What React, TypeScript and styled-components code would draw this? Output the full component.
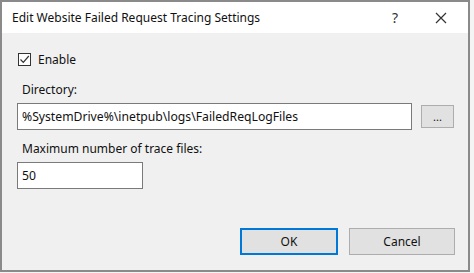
import styled, { createGlobalStyle } from "styled-components";

const Global = createGlobalStyle`
  html, body {
    margin: 0;
    padding: 0;
    background: #f4f4f4;
  }
  body {
    font-family: "Noto Sans", "Open Sans", sans-serif;
    font-size: 12px;
    color: #111;
  }
`;

export default function App() {
  return (
    <>
      <Global />
      <Window>
        <TitleBar>
          <Title>Edit Website Failed Request Tracing Settings</Title>
          <Controls>
            <Help>?</Help>
            <Close>
              <svg width="12" height="12" viewBox="0 0 12 12">
                <path d="M1 1 L11 11 M11 1 L1 11" stroke="#333" strokeWidth="1.2" />
              </svg>
            </Close>
          </Controls>
        </TitleBar>
        <Body>
          <CheckRow>
            <Box>
              <svg width="11" height="11" viewBox="0 0 11 11">
                <path d="M1.5 5.5 L4.3 8.3 L9.8 2" stroke="#333" strokeWidth="1.2" fill="none" />
              </svg>
            </Box>
            <span>Enable</span>
          </CheckRow>
          <Label $top="13px">Directory:</Label>
          <DirRow>
            <TextField $width="395px">%SystemDrive%\inetpub\logs\FailedReqLogFiles</TextField>
            <Browse>...</Browse>
          </DirRow>
          <Label $top="10px">Maximum number of trace files:</Label>
          <TextField $width="126px">50</TextField>
        </Body>
        <Footer>
          <Button $primary>OK</Button>
          <Button>Cancel</Button>
        </Footer>
      </Window>
    </>
  );
}

const Window = styled.div`
  width: 470px;
  height: 272px;
  box-sizing: border-box;
  border: 2px solid #8a8a8a;
  background: #f0f0f0;
  display: flex;
  flex-direction: column;
`;

const TitleBar = styled.div`
  height: 31px;
  background: #ffffff;
  display: flex;
  align-items: center;
  justify-content: space-between;
  padding-left: 10px;
`;

const Title = styled.div`
  font-size: 12px;
`;

const Controls = styled.div`
  display: flex;
  align-items: center;
`;

const Help = styled.div`
  width: 46px;
  text-align: center;
  font-size: 14px;
  color: #333;
`;

const Close = styled.div`
  width: 46px;
  display: flex;
  justify-content: center;
  margin-right: 4px;
`;

const Body = styled.div`
  flex: 1;
  padding: 18px 14px 0 15px;
  display: flex;
  flex-direction: column;
  align-items: flex-start;
`;

const CheckRow = styled.div`
  display: flex;
  align-items: center;
  gap: 7px;
  margin-left: 1px;
`;

const Box = styled.div`
  width: 13px;
  height: 13px;
  box-sizing: border-box;
  border: 1px solid #333;
  background: #fff;
  display: flex;
  align-items: center;
  justify-content: center;
`;

const Label = styled.div<{ $top: string }>`
  margin: ${(p) => p.$top} 0 5px 5px;
`;

const DirRow = styled.div`
  display: flex;
  align-items: center;
  gap: 9px;
`;

const TextField = styled.div<{ $width: string }>`
  width: ${(p) => p.$width};
  height: 27px;
  box-sizing: border-box;
  border: 1px solid #7a7a7a;
  background: #fff;
  padding: 0 4px;
  display: flex;
  align-items: center;
  font-size: 12.2px;
`;

const Browse = styled.div`
  width: 33px;
  height: 23px;
  box-sizing: border-box;
  border: 1px solid #adadad;
  background: #e1e1e1;
  display: flex;
  justify-content: center;
  align-items: center;
  font-size: 11px;
`;

const Footer = styled.div`
  display: flex;
  justify-content: flex-end;
  gap: 11px;
  padding: 0 13px 15px 0;
`;

const Button = styled.div<{ $primary?: boolean }>`
  width: ${(p) => (p.$primary ? "98px" : "106px")};
  height: 27px;
  box-sizing: border-box;
  border: ${(p) => (p.$primary ? "2px solid #0078d7" : "1px solid #adadad")};
  background: #e1e1e1;
  display: flex;
  justify-content: center;
  align-items: center;
  font-size: 12px;
`;
